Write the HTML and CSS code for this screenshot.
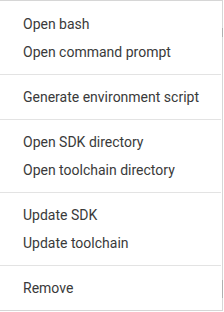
FILE: index.html
```html
<!DOCTYPE html>
<html lang="en">
<head>
    <meta charset="UTF-8">
    <meta name="viewport" content="width=device-width, initial-scale=1.0">
    <title>SDK Menu</title>
    <link rel="stylesheet" href="styles.css">
</head>
<body>
    <!-- Context menu -->
    <div class="menu">
        <div class="menu-group">
            <div class="menu-item">Open bash</div>
            <div class="menu-item">Open command prompt</div>
        </div>
        <div class="menu-group">
            <div class="menu-item">Generate environment script</div>
        </div>
        <div class="menu-group">
            <div class="menu-item">Open SDK directory</div>
            <div class="menu-item">Open toolchain directory</div>
        </div>
        <div class="menu-group">
            <div class="menu-item">Update SDK</div>
            <div class="menu-item">Update toolchain</div>
        </div>
        <div class="menu-group">
            <div class="menu-item">Remove</div>
        </div>
        <span class="scroll-mark top"></span>
        <span class="scroll-mark bottom"></span>
    </div>
</body>
</html>
```

FILE: styles.css
```css
body {
    margin: 0;
    background-color: #fff;
    font-family: Roboto, "Noto Sans", sans-serif;
}
.menu {
    position: relative;
    width: 224px;
    margin-left: -1px;
    box-sizing: border-box;
    border: 1px solid #d6d6d6;
    background-color: #fff;
}
.menu-group {
    padding: 8px 0;
    border-top: 1px solid #e3e3e3;
    margin-right: 1px;
}
.menu-group:first-child {
    border-top: none;
    padding-top: 9px;
}
.menu-item {
    height: 28px;
    line-height: 28px;
    padding-left: 23px;
    font-size: 14px;
    color: #3a3a3a;
    white-space: nowrap;
}
.scroll-mark {
    position: absolute;
    right: -1px;
    width: 1px;
    background-color: #b0b0b0;
}
.scroll-mark.top {
    top: 27px;
    height: 9px;
}
.scroll-mark.bottom {
    top: 279px;
    height: 18px;
}
```
